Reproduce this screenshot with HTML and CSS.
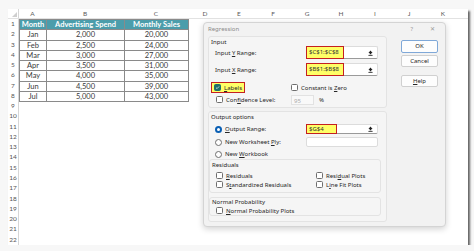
FILE: index.html
```html
<!DOCTYPE html>
<html lang="en">

<head>
    <meta charset="UTF-8">
    <title>Regression</title>
    <link rel="stylesheet" href="styles.css">
</head>

<body>
    <div class="sheet">
        <div class="colhead">
            <div class="corner"><span class="tri"></span></div>
            <div class="col ca">A</div>
            <div class="col cb">B</div>
            <div class="col cc">C</div>
            <div class="col">D</div>
            <div class="col">E</div>
            <div class="col">F</div>
            <div class="col">G</div>
            <div class="col">H</div>
            <div class="col">I</div>
            <div class="col">J</div>
            <div class="col">K</div>
        </div>

        <div class="sheet-body">
            <div class="rownums">
                <div>1</div><div>2</div><div>3</div><div>4</div><div>5</div><div>6</div>
                <div>7</div><div>8</div><div>9</div><div>10</div><div>11</div><div>12</div>
                <div>13</div><div>14</div><div>15</div><div>16</div><div>17</div><div>18</div>
                <div>19</div><div>20</div><div>21</div><div>22</div>
            </div>

            <table class="data">
                <tr class="thead"><td>Month</td><td>Advertising Spend</td><td>Monthly Sales</td></tr>
                <tr><td>Jan</td><td>2,000</td><td>20,000</td></tr>
                <tr><td>Feb</td><td>2,500</td><td>24,000</td></tr>
                <tr><td>Mar</td><td>3,000</td><td>27,000</td></tr>
                <tr><td>Apr</td><td>3,500</td><td>31,000</td></tr>
                <tr><td>May</td><td>4,000</td><td>35,000</td></tr>
                <tr><td>Jun</td><td>4,500</td><td>39,000</td></tr>
                <tr><td>Jul</td><td>5,000</td><td>43,000</td></tr>
            </table>
        </div>

        <!-- regression dialog sits over the sheet -->
        <div class="dialog">
            <div class="titlebar">
                <span class="title">Regression</span>
                <span class="tbtns"><span>?</span><span class="x">&#x2715;</span></span>
            </div>

            <div class="dlg-main">
                <div class="left">
                    <div class="group g-input">
                        <div class="ghead">Input</div>
                        <div class="frow">
                            <span class="flabel"><span>Input <u>Y</u> Range:</span></span>
                            <span class="field"><span class="hl">$C$1:$C$8</span><svg class="pick" viewBox="0 0 6 7"><path d="M3 0.5 L5.5 3.5 H4 V5 H2 V3.5 H0.5 Z" fill="#222"/><rect x="0.5" y="5.8" width="5" height="1" fill="#222"/></svg></span>
                        </div>
                        <div class="frow r2">
                            <span class="flabel"><span>Input <u>X</u> Range:</span></span>
                            <span class="field"><span class="hl">$B$1:$B$8</span><svg class="pick" viewBox="0 0 6 7"><path d="M3 0.5 L5.5 3.5 H4 V5 H2 V3.5 H0.5 Z" fill="#222"/><rect x="0.5" y="5.8" width="5" height="1" fill="#222"/></svg></span>
                        </div>
                        <div class="crow r3">
                            <span class="c1"><span class="hlbox"><span class="chk on"><svg viewBox="0 0 8 8"><path d="M1.6 4.2 L3.3 5.8 L6.5 2.3" stroke="#fff" stroke-width="1.1" fill="none"/></svg></span><span><u>L</u>abels</span></span></span>
                            <span class="c2"><span class="chk"></span><span>Constant is <u>Z</u>ero</span></span>
                        </div>
                        <div class="crow r4">
                            <span class="c1 ind"><span class="chk"></span><span>Con<u>f</u>idence Level:</span></span>
                            <span class="c2"><span class="small-field">95</span><span class="pct">%</span></span>
                        </div>
                    </div>

                    <div class="group g-output">
                        <div class="ghead">Output options</div>
                        <div class="frow o1">
                            <span class="flabel"><span class="radio on"></span><span><u>O</u>utput Range:</span></span>
                            <span class="field"><span class="hl short">$G$4</span><svg class="pick" viewBox="0 0 6 7"><path d="M3 0.5 L5.5 3.5 H4 V5 H2 V3.5 H0.5 Z" fill="#222"/><rect x="0.5" y="5.8" width="5" height="1" fill="#222"/></svg></span>
                        </div>
                        <div class="frow o2">
                            <span class="flabel"><span class="radio"></span><span>New Worksheet <u>P</u>ly:</span></span>
                            <span class="field plain"></span>
                        </div>
                        <div class="frow o3">
                            <span class="flabel"><span class="radio"></span><span>New <u>W</u>orkbook</span></span>
                        </div>

                        <div class="subgroup resid">
                            <div class="ghead">Residuals</div>
                            <div class="crow s">
                                <span class="c1"><span class="chk"></span><span><u>R</u>esiduals</span></span>
                                <span class="c3"><span class="chk"></span><span>Resi<u>d</u>ual Plots</span></span>
                            </div>
                            <div class="crow s">
                                <span class="c1"><span class="chk"></span><span>S<u>t</u>andardized Residuals</span></span>
                                <span class="c3"><span class="chk"></span><span>L<u>i</u>ne Fit Plots</span></span>
                            </div>
                        </div>

                        <div class="subgroup normal">
                            <div class="ghead">Normal Probability</div>
                            <div class="crow s">
                                <span class="c1"><span class="chk"></span><span><u>N</u>ormal Probability Plots</span></span>
                            </div>
                        </div>
                    </div>
                </div>

                <div class="buttons">
                    <div class="btn ok">OK</div>
                    <div class="btn cancel">Cancel</div>
                    <div class="btn help"><u>H</u>elp</div>
                </div>
            </div>
        </div>
    </div>
</body>

</html>
```

FILE: styles.css
```css
body {
    margin: 0;
    background-color: #f7f7f7;
    font-family: Lato, "Liberation Sans", sans-serif;
}

.sheet {
    position: relative;
    margin: 9px 0 0 8px;
    width: 460px;
    height: 236px;
    background-color: white;
    box-shadow: 2px 2px 2px rgba(0, 0, 0, 0.6);
}

/* column letters */
.colhead {
    display: flex;
    height: 10px;
    border-bottom: 1px solid #e2e2e2;
    box-sizing: border-box;
}

.corner {
    position: relative;
    width: 11px;
    border-right: 1px solid #d6d6d6;
    box-sizing: border-box;
}

.tri {
    position: absolute;
    right: 1px;
    bottom: 1px;
    width: 0;
    height: 0;
    border-left: 5px solid transparent;
    border-bottom: 5px solid #cfcfcf;
}

.col {
    width: 34px;
    text-align: center;
    font-size: 6.5px;
    line-height: 10px;
    color: #5c5c5c;
}

.ca {
    width: 27px;
}

.cb {
    width: 78px;
}

.cc {
    width: 64px;
}

.sheet-body {
    display: flex;
    align-items: flex-start;
}

.rownums {
    width: 11px;
    border-right: 1px solid #d6d6d6;
    box-sizing: border-box;
}

.rownums div {
    height: 10.27px;
    line-height: 10.27px;
    font-size: 6.5px;
    color: #555;
    text-align: center;
}

.data {
    border-collapse: collapse;
    font-size: 7.5px;
    color: #3a3a3a;
}

.data td {
    height: 10.27px;
    padding: 0;
    border: 1px solid #8a8a8a;
    text-align: center;
    line-height: 9px;
    box-sizing: border-box;
}

.data td:nth-child(1) {
    width: 27px;
}

.data td:nth-child(2) {
    width: 78px;
}

.data td:nth-child(3) {
    width: 64px;
}

.data .thead td {
    background-color: #4b9dab;
    color: white;
    font-weight: bold;
}

/* dialog */
.dialog {
    position: absolute;
    left: 195px;
    top: 13px;
    width: 243px;
    height: 205px;
    box-sizing: border-box;
    padding: 0 7px 0 4px;
    background-color: #f2f2f2;
    border: 1px solid #d4d4d4;
    border-radius: 4px;
    box-shadow: 0px 2px 6px rgba(0, 0, 0, 0.18);
    font-family: "Noto Sans", "Open Sans", sans-serif;
    font-size: 6px;
    color: #262626;
    white-space: nowrap;
}

.titlebar {
    display: flex;
    justify-content: space-between;
    height: 13px;
    padding-top: 2px;
    box-sizing: border-box;
    line-height: 8px;
}

.title {
    color: #8a8a8a;
}

.tbtns {
    display: flex;
    gap: 17px;
    color: #9a9a9a;
    margin-right: 3px;
}

.tbtns .x {
    font-size: 6px;
}

.dlg-main {
    display: flex;
    gap: 14px;
}

.left {
    width: 179px;
    display: flex;
    flex-direction: column;
    gap: 3px;
}

.group {
    box-sizing: border-box;
    padding: 1px 8px 0 2px;
    border: 1px solid #e3e3e3;
    border-radius: 3px;
    background-color: #f5f5f5;
}

.g-input {
    height: 72px;
}

.g-output {
    height: 111px;
}

.ghead {
    height: 8px;
    line-height: 8px;
}

.frow {
    display: flex;
    align-items: center;
    height: 13px;
    padding-left: 4px;
}

.r2 {
    margin-top: 4px;
}

.flabel {
    display: flex;
    align-items: center;
    width: 91px;
    flex: none;
}

.field {
    display: flex;
    align-items: center;
    width: 72px;
    height: 100%;
    box-sizing: border-box;
    background-color: white;
    border: 1px solid #dcdcdc;
    border-bottom-color: #9a9a9a;
    border-radius: 2px;
}

.field.plain {
    border-bottom-color: #dcdcdc;
}

.hl {
    display: flex;
    align-items: center;
    width: 38px;
    height: calc(100% + 2px);
    margin: -1px 0 0 -1px;
    padding-left: 2px;
    box-sizing: border-box;
    background-color: #ffff66;
    border: 1.5px solid #c42020;
    color: #333;
}

.hl.short {
    width: 31px;
}

.pick {
    width: 5px;
    height: 6px;
    margin-left: auto;
    margin-right: 4px;
}

.crow {
    display: flex;
    align-items: center;
    height: 11px;
}

.r3 {
    margin-top: 6px;
}

.r4 {
    margin-top: 1px;
}

.c1 {
    display: flex;
    align-items: center;
    width: 80px;
    flex: none;
}

.c1.ind {
    padding-left: 5px;
    box-sizing: border-box;
}

.c2 {
    display: flex;
    align-items: center;
}

.c3 {
    display: flex;
    align-items: center;
    margin-left: 2px;
}

.hlbox {
    display: flex;
    align-items: center;
    height: 11px;
    padding: 0 2px 0 2px;
    box-sizing: border-box;
    background-color: #ffff66;
    border: 1.5px solid #c42020;
}

.chk {
    display: inline-block;
    width: 7px;
    height: 7px;
    margin-right: 3px;
    box-sizing: border-box;
    border: 1px solid #6e6e6e;
    border-radius: 1.5px;
    background-color: white;
}

.chk.on {
    background-color: #1f6f6a;
    border-color: #1f6f6a;
}

.chk svg {
    display: block;
    width: 100%;
    height: 100%;
}

.small-field {
    width: 23px;
    height: 10px;
    line-height: 10px;
    padding-left: 2px;
    box-sizing: border-box;
    background-color: #f9f9f9;
    border: 1px solid #e2e2e2;
    color: #aaa;
}

.pct {
    margin-left: 5px;
}

.o1 {
    margin-top: 3px;
    height: 10px;
}

.o2 {
    margin-top: 3px;
    height: 10px;
}

.o3 {
    margin-top: 2px;
    height: 10px;
}

.radio {
    display: inline-block;
    width: 7px;
    height: 7px;
    margin-right: 3px;
    box-sizing: border-box;
    border: 1px solid #6e6e6e;
    border-radius: 50%;
    background-color: white;
}

.radio.on {
    border: 2px solid #0a5fb4;
}

.subgroup {
    margin: 0 0 0 -2px;
    padding: 1px 0 0 2px;
    border: 1px solid #e3e3e3;
    border-radius: 3px;
    width: 172px;
    box-sizing: border-box;
}

.resid {
    height: 34px;
}

.resid .ghead {
    margin-bottom: 2px;
}

.normal {
    margin-top: 4px;
    height: 19px;
}

.normal .ghead {
    height: 7px;
    line-height: 7px;
}

.crow.s {
    height: 9px;
    padding-left: 4px;
}

.crow.s .c1 {
    width: 98px;
}

.buttons {
    width: 39px;
    padding-top: 4px;
    display: flex;
    flex-direction: column;
}

.btn {
    height: 12px;
    line-height: 11px;
    text-align: center;
    box-sizing: border-box;
    background-color: #fdfdfd;
    border: 1px solid #d0d0d0;
    border-radius: 2px;
}

.btn.ok {
    height: 13px;
    line-height: 11px;
    border-color: #7fa8d8;
}

.btn.cancel {
    margin-top: 2px;
}

.btn.help {
    margin-top: 8px;
}
```
